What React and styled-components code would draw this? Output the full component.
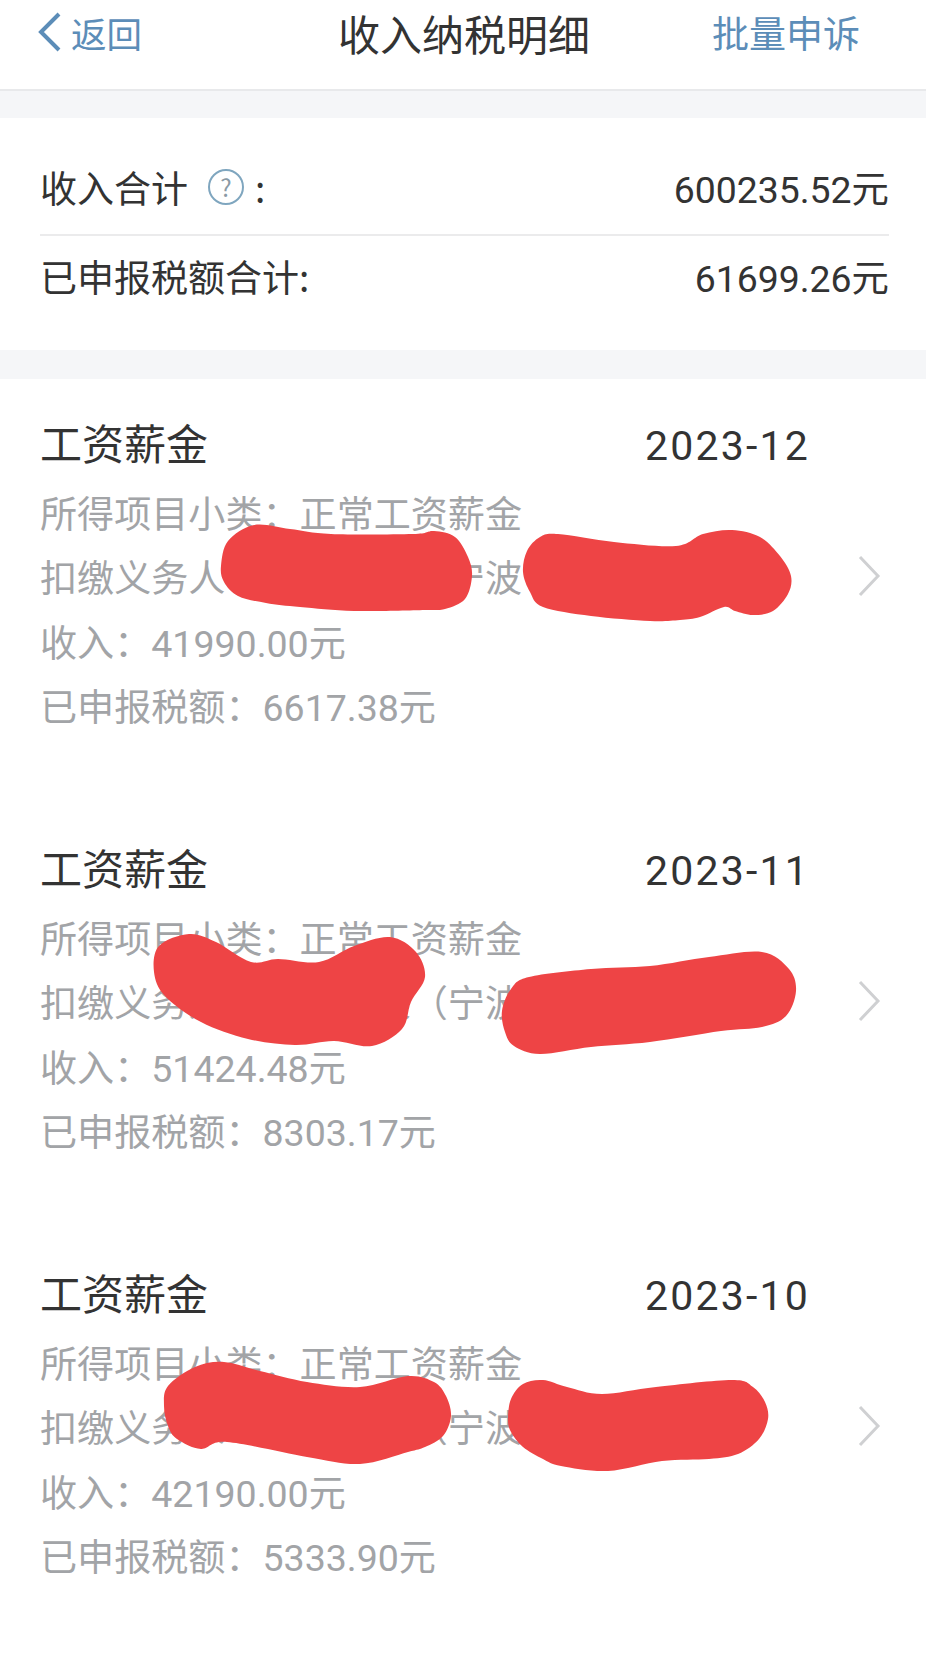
import React from "react";
import styled, { createGlobalStyle } from "styled-components";

const GlobalStyle = createGlobalStyle`
  html, body {
    margin: 0;
    padding: 0;
    background: #fff;
  }
  body {
    width: 926px;
    height: 1664px;
    overflow: hidden;
    font-family: "Noto Sans CJK SC", "Noto Sans", sans-serif;
  }
`;

const Page = styled.div`
  width: 926px;
  height: 1664px;
  background: #fff;
`;

const Header = styled.header`
  display: grid;
  grid-template-columns: 1fr auto 1fr;
  align-items: center;
  height: 64px;
  padding: 0 38px 25px 38px;
  border-bottom: 2px solid #e8e9eb;
`;

const Back = styled.div`
  display: flex;
  align-items: center;
  gap: 9px;
  font-size: 35.5px;
  color: #5c8db8;
`;

const Title = styled.h1`
  margin: 0 0 0 2px;
  font-size: 42px;
  font-weight: 400;
  color: #333;
`;

const HeaderAction = styled.div`
  justify-self: end;
  margin-right: 28px;
  font-size: 37px;
  color: #5c8db8;
`;

const Band = styled.div`
  height: ${(p) => p.$h}px;
  background: #f5f6f8;
`;

const Summary = styled.section`
  height: 211px;
  padding: 21px 37px 0 40px;
`;

const SummaryRow = styled.div`
  display: flex;
  justify-content: space-between;
  align-items: center;
  height: ${(p) => p.$h}px;
  font-size: 37px;
  color: #333;
  border-bottom: ${(p) => (p.$line ? "2px solid #ebebec" : "none")};
`;

const Label = styled.div`
  display: flex;
  align-items: center;
`;

const Help = styled.span`
  display: flex;
  align-items: center;
  justify-content: center;
  width: 32px;
  height: 32px;
  margin: 0 11px 0 20px;
  border: 2px solid #7fa6bf;
  border-radius: 50%;
  font-size: 24px;
  line-height: 1;
  color: #8a9aa5;
`;

const Amount = styled.div`
  font-family: Roboto, "Noto Sans CJK SC", sans-serif;
  font-size: 37.4px;
`;

const Card = styled.article`
  position: relative;
  display: flex;
  align-items: center;
  box-sizing: border-box;
  height: 425px;
  padding: 30px 0 67px 40px;
`;

const CardMain = styled.div`
  width: 770px;
`;

const CardHead = styled.div`
  display: flex;
  justify-content: space-between;
  align-items: center;
  height: 65px;
  margin-bottom: 6px;
  font-size: 42px;
  color: #333;
`;

const DateText = styled.span`
  margin-top: 10px;
  font-family: Roboto, sans-serif;
  font-size: 41px;
  letter-spacing: 2.2px;
`;

const Line = styled.div`
  height: 64.5px;
  line-height: 64.5px;
  font-size: 37.08px;
  white-space: nowrap;
  color: #a2a4a7;
`;

const Num = styled.span`
  font-family: Roboto, sans-serif;
  font-size: 37.5px;
`;

const Chevron = styled.svg`
  display: block;
  width: 24px;
  height: 42px;
  margin: 6px 0 0 47px;
`;

const Scribble = styled.svg`
  position: absolute;
  left: 0;
  top: 0;
  width: 926px;
  height: 425px;
`;

// closed smooth outline through the given points
function blobPath(pts) {
  const n = pts.length;
  let d = `M${pts[0][0]} ${pts[0][1]}`;
  for (let i = 0; i < n; i++) {
    const p0 = pts[(i - 1 + n) % n];
    const p1 = pts[i];
    const p2 = pts[(i + 1) % n];
    const p3 = pts[(i + 2) % n];
    const c1x = p1[0] + (p2[0] - p0[0]) / 6;
    const c1y = p1[1] + (p2[1] - p0[1]) / 6;
    const c2x = p2[0] - (p3[0] - p1[0]) / 6;
    const c2y = p2[1] - (p3[1] - p1[1]) / 6;
    d += `C${c1x} ${c1y} ${c2x} ${c2y} ${p2[0]} ${p2[1]}`;
  }
  return d + "Z";
}

const records = [
  {
    date: "2023-12",
    income: "41990.00",
    tax: "6617.38",
    blobs: [
      [[221,187],[228,162],[254,146],[290,150],[331,155],[413,155],[434,152],[455,158],[468,178],[472,197],[465,220],[445,230],[425,231],[354,232],[300,228],[266,224],[238,217],[224,203]],
      [[523,193],[527,172],[540,158],[558,155],[614,163],[676,167],[703,155],[732,151],[760,158],[780,177],[791,197],[788,215],[773,232],[753,236],[735,232],[724,228],[700,238],[680,241],[650,242],[591,237],[543,228],[530,213]],
    ],
  },
  {
    date: "2023-11",
    income: "51424.48",
    tax: "8303.17",
    blobs: [
      [[154,168],[159,142],[189,130],[216,138],[251,158],[278,155],[319,158],[354,142],[390,133],[416,148],[425,173],[411,198],[402,225],[372,242],[334,237],[295,241],[248,235],[201,218],[165,192]],
      [[502,207],[511,185],[529,173],[591,165],[650,162],[709,153],[762,148],[789,165],[796,187],[786,212],[762,223],[721,227],[650,238],[591,243],[540,250],[514,242],[505,228]],
    ],
  },
  {
    date: "2023-10",
    income: "42190.00",
    tax: "5333.90",
    blobs: [
      [[164,177],[168,157],[195,138],[224,133],[260,142],[307,153],[360,158],[408,147],[434,153],[446,167],[451,187],[443,207],[425,218],[408,223],[360,235],[307,228],[227,213],[201,220],[177,210],[168,197]],
      [[508,190],[511,170],[523,155],[543,151],[567,158],[602,165],[656,158],[732,151],[753,158],[765,173],[768,190],[759,210],[738,225],[709,230],[662,232],[608,242],[561,237],[543,230],[523,218],[511,203]],
    ],
  },
];

function Record({ item }) {
  return (
    <Card>
      <CardMain>
        <CardHead>
          <span>工资薪金</span>
          <DateText>{item.date}</DateText>
        </CardHead>
        <Line>所得项目小类：正常工资薪金</Line>
        <Line>扣缴义务人：某某某某（宁波　某某公司</Line>
        <Line>收入：<Num>{item.income}</Num>元</Line>
        <Line>已申报税额：<Num>{item.tax}</Num>元</Line>
      </CardMain>
      <Chevron viewBox="0 0 24 42">
        <polyline points="3,2 21,21 3,40" fill="none" stroke="#cfd0d2" strokeWidth="3" />
      </Chevron>
      <Scribble viewBox="0 0 926 425">
        {item.blobs.map((pts, i) => (
          <path key={i} d={blobPath(pts)} fill="#ee4445" />
        ))}
      </Scribble>
    </Card>
  );
}

export default function App() {
  return (
    <Page>
      <GlobalStyle />
      <Header>
        <Back>
          <svg width="24" height="40" viewBox="0 0 24 40">
            <polyline points="21,2 3,20 21,38" fill="none" stroke="#5c8db8" strokeWidth="4" />
          </svg>
          <span>返回</span>
        </Back>
        <Title>收入纳税明细</Title>
        <HeaderAction>批量申诉</HeaderAction>
      </Header>
      <Band $h={27} />
      <Summary>
        <SummaryRow $h={95} $line>
          <Label>
            收入合计
            <Help>?</Help>:
          </Label>
          <Amount>600235.52元</Amount>
        </SummaryRow>
        <SummaryRow $h={80}>
          <Label>已申报税额合计:</Label>
          <Amount>61699.26元</Amount>
        </SummaryRow>
      </Summary>
      <Band $h={29} />
      {records.map((item) => (
        <Record key={item.date} item={item} />
      ))}
    </Page>
  );
}
